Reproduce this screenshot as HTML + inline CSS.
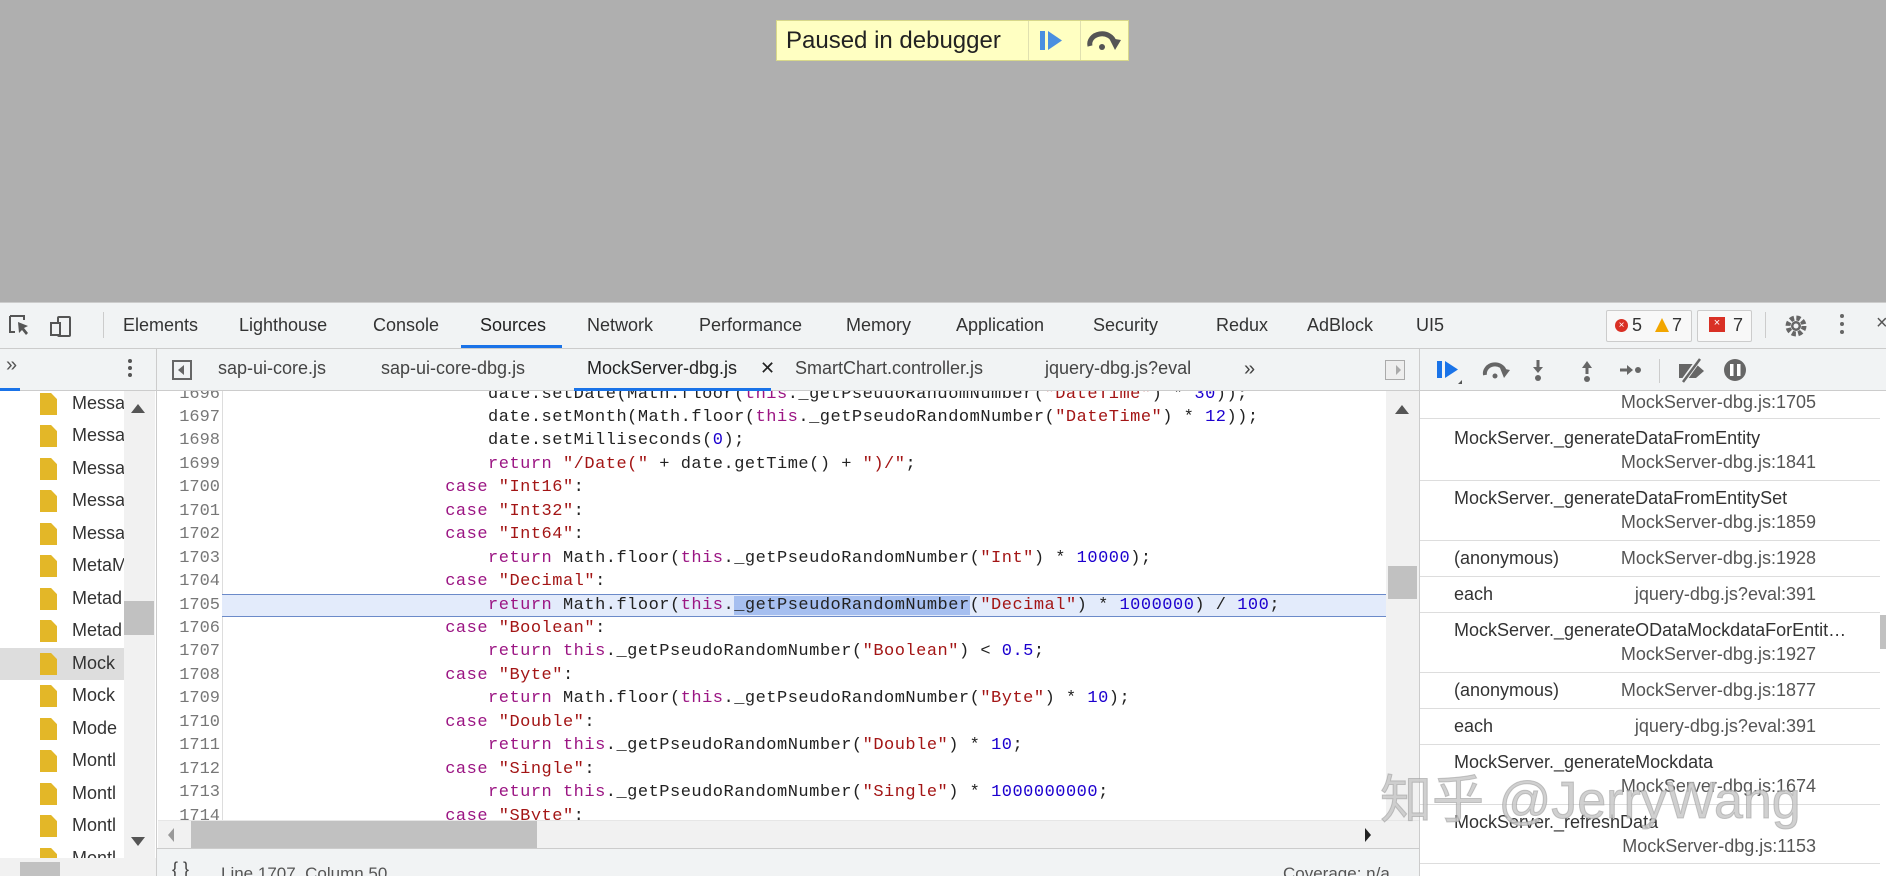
<!DOCTYPE html>
<html><head><meta charset="utf-8"><style>
*{margin:0;padding:0;box-sizing:border-box}
html,body{width:1886px;height:876px;overflow:hidden}
body{position:relative;background:#afafaf;font-family:"Liberation Sans",sans-serif;color:#333}
.a{position:absolute}
.tab{position:absolute;top:315px;font-size:18px;color:#333}
.ft{position:absolute;top:358px;font-size:18px;color:#444}
.code{position:absolute;left:158px;top:391px;width:1228px;height:429px;overflow:hidden;background:#fff}
.ln{position:absolute;left:0;width:1228px;height:23.45px;font-family:"Liberation Mono",monospace;font-size:17px;letter-spacing:0.5px;line-height:23.45px;white-space:pre;color:#222}
.ln .n{position:absolute;left:14px;width:48px;text-align:right;color:#777;letter-spacing:0}
.ln .c{position:absolute;left:116px}
.k{color:#9b1583}.s{color:#a31515}.m{color:#1c00cf}
.fi{position:absolute;left:0;width:124px;height:32px;font-size:18px}
.fi i{position:absolute;left:40px;top:5px;width:17px;height:22px;background:#e3b728;clip-path:polygon(0 0,65% 0,100% 28%,100% 100%,0 100%)}
.fi span{position:absolute;left:72px;top:5px;width:52px;overflow:hidden;white-space:nowrap;color:#333}
.cs{position:absolute;left:1420px;width:460px;border-bottom:1px solid #ddd;font-size:18px;color:#333}
.cs .nm{position:absolute;left:34px}
.cs .fl{position:absolute;right:64px;color:#555}
</style></head><body>
<div class="a" style="left:776px;top:20px;width:353px;height:41px;background:#ffffc2;border:1px solid #d8d88a"></div>
<div class="a" style="left:786px;top:27px;font-size:24px;color:#222">Paused in debugger</div>
<div class="a" style="left:1028px;top:21px;width:1px;height:39px;background:#e0e0b0"></div>
<div class="a" style="left:1080px;top:21px;width:1px;height:39px;background:#e0e0b0"></div>
<svg class="a" style="left:1040px;top:29px" width="28" height="24"><rect x="0" y="2" width="5" height="19" fill="#4a8fe0"/><path d="M8 2 L22 11.5 L8 21Z" fill="#4a8fe0"/></svg>
<svg class="a" style="left:1086px;top:30px" width="40" height="24"><path d="M4 16 A12 10 0 0 1 28 12" stroke="#555" stroke-width="5" fill="none"/><path d="M23 8 L35 10 L29 20Z" fill="#555"/><circle cx="16" cy="17" r="3" fill="#555"/></svg>

<div class="a" style="left:0;top:302px;width:1886px;height:574px;background:#fff"></div>
<div class="a" style="left:0;top:302px;width:1886px;height:47px;background:#f1f3f4;border-top:1px solid #ccc;border-bottom:1px solid #ccc"></div>
<svg class="a" style="left:8px;top:314px" width="70" height="24"><path d="M2 2h14v4M2 2v16h5" stroke="#555" stroke-width="2" fill="none"/><path d="M10 8l10 4-4 2 4 5-2 2-4-5-3 3z" fill="#555"/><rect x="50" y="3" width="12" height="19" rx="1" stroke="#555" stroke-width="2" fill="none"/><rect x="43" y="9" width="9" height="12" stroke="#555" stroke-width="2" fill="#f1f3f4"/></svg>
<div class="a" style="left:103px;top:312px;width:1px;height:26px;background:#ccc"></div>
<div class="tab" style="left:123px">Elements</div>
<div class="tab" style="left:239px">Lighthouse</div>
<div class="tab" style="left:373px">Console</div>
<div class="tab" style="left:480px;color:#222">Sources</div>
<div class="a" style="left:461px;top:345px;width:101px;height:3px;background:#1a73e8"></div>
<div class="tab" style="left:587px">Network</div>
<div class="tab" style="left:699px">Performance</div>
<div class="tab" style="left:846px">Memory</div>
<div class="tab" style="left:956px">Application</div>
<div class="tab" style="left:1093px">Security</div>
<div class="tab" style="left:1216px">Redux</div>
<div class="tab" style="left:1307px">AdBlock</div>
<div class="tab" style="left:1416px">UI5</div>
<div class="a" style="left:1606px;top:310px;width:86px;height:32px;border:1px solid #ccc;border-radius:2px;background:#f8f8f8"></div>
<div class="a" style="left:1615px;top:319px;width:13px;height:13px;border-radius:50%;background:#d93025;color:#fff;font-size:10px;text-align:center;line-height:13px">×</div>
<div class="a" style="left:1632px;top:315px;font-size:18px">5</div>
<svg class="a" style="left:1654px;top:317px" width="16" height="16"><path d="M8 1L15 15H1Z" fill="#f2a600"/></svg>
<div class="a" style="left:1672px;top:315px;font-size:18px">7</div>
<div class="a" style="left:1697px;top:310px;width:55px;height:32px;border:1px solid #ccc;border-radius:2px;background:#f8f8f8"></div>
<div class="a" style="left:1709px;top:317px;width:16px;height:15px;background:#d93025;color:#fff;font-size:11px;text-align:center;line-height:13px">×</div>
<div class="a" style="left:1733px;top:315px;font-size:18px">7</div>
<div class="a" style="left:1765px;top:312px;width:1px;height:26px;background:#ccc"></div>
<svg class="a" style="left:1784px;top:314px" width="24" height="24"><circle cx="12" cy="12" r="8" fill="none" stroke="#666" stroke-width="5" stroke-dasharray="4 2.3"/><circle cx="12" cy="12" r="5" fill="#666"/><circle cx="12" cy="12" r="2.5" fill="#f1f3f4"/></svg>
<div class="a" style="left:1840px;top:314px;width:4px;height:4px;background:#666;border-radius:50%;box-shadow:0 8px #666,0 16px #666"></div>
<div class="a" style="left:1876px;top:312px;font-size:20px;color:#555">×</div>

<div class="a" style="left:0;top:349px;width:1886px;height:42px;background:#f1f3f4;border-bottom:1px solid #ccc"></div>
<div class="a" style="left:6px;top:354px;font-size:20px;color:#555">»</div>
<div class="a" style="left:0;top:388px;width:20px;height:3px;background:#1a73e8"></div>
<div class="a" style="left:128px;top:359px;width:4px;height:4px;background:#555;border-radius:50%;box-shadow:0 7px #555,0 14px #555"></div>
<div class="a" style="left:156px;top:349px;width:1px;height:527px;background:#ccc"></div>
<div class="a" style="left:172px;top:360px;width:20px;height:20px;border:2px solid #666"></div>
<div class="a" style="left:178px;top:365px;width:0;height:0;border-top:5px solid transparent;border-bottom:5px solid transparent;border-right:6px solid #666"></div>
<div class="ft" style="left:218px">sap-ui-core.js</div>
<div class="ft" style="left:381px">sap-ui-core-dbg.js</div>
<div class="ft" style="left:587px;color:#222">MockServer-dbg.js</div>
<div class="ft" style="left:760px;color:#222">✕</div>
<div class="a" style="left:574px;top:388px;width:197px;height:3px;background:#1a73e8"></div>
<div class="ft" style="left:795px">SmartChart.controller.js</div>
<div class="ft" style="left:1045px">jquery-dbg.js?eval</div>
<div class="ft" style="left:1244px;font-size:20px">»</div>
<div class="a" style="left:1385px;top:360px;width:20px;height:20px;border:1px solid #aaa;background:#eee"></div>
<div class="a" style="left:1396px;top:365px;width:0;height:0;border-top:5px solid transparent;border-bottom:5px solid transparent;border-left:5px solid #aaa"></div>
<div class="a" style="left:1419px;top:349px;width:1px;height:527px;background:#ccc"></div>
<svg class="a" style="left:1432px;top:356px" width="340" height="34"><rect x="5" y="5" width="5" height="17" fill="#1a73e8"/><path d="M13 5L26 13.5L13 22Z" fill="#1a73e8"/><path d="M26 28L30 24V28Z" fill="#555"/>
<path d="M53 19A10 9 0 0 1 73 16" stroke="#666" stroke-width="4" fill="none"/><path d="M68 12L78 14L72 22Z" fill="#666"/><circle cx="63" cy="20" r="2.5" fill="#666"/>
<path d="M106 4V14" stroke="#666" stroke-width="3"/><path d="M101 11L106 17L111 11Z" fill="#666"/><circle cx="106" cy="22" r="3" fill="#666"/>
<path d="M155 10V18" stroke="#666" stroke-width="3"/><path d="M150 12L155 5L160 12Z" fill="#666"/><circle cx="155" cy="23" r="3" fill="#666"/>
<path d="M188 14H196" stroke="#666" stroke-width="3"/><path d="M195 9L201 14L195 19Z" fill="#666"/><circle cx="206" cy="14" r="3" fill="#666"/>
<rect x="227" y="3" width="1" height="24" fill="#ccc"/>
<path d="M247 8H264L272 15L264 22H247Z" fill="#666"/><path d="M250 27L268 2" stroke="#f1f3f4" stroke-width="5"/><path d="M251 26L268 3" stroke="#666" stroke-width="2.5"/>
<circle cx="303" cy="14" r="11" fill="#666"/><rect x="298" y="8" width="3.5" height="12" fill="#fff"/><rect x="305" y="8" width="3.5" height="12" fill="#fff"/></svg>

<div class="a" style="left:0;top:391px;width:156px;height:467px;background:#fff"></div>
<div class="fi" style="top:388px"><i></i><span>Messa</span></div>
<div class="fi" style="top:420px"><i></i><span>Messa</span></div>
<div class="fi" style="top:453px"><i></i><span>Messa</span></div>
<div class="fi" style="top:485px"><i></i><span>Messa</span></div>
<div class="fi" style="top:518px"><i></i><span>Messa</span></div>
<div class="fi" style="top:550px"><i></i><span>MetaM</span></div>
<div class="fi" style="top:583px"><i></i><span>Metad</span></div>
<div class="fi" style="top:615px"><i></i><span>Metad</span></div>
<div class="fi" style="top:648px;background:#ddd"><i></i><span>Mock</span></div>
<div class="fi" style="top:680px"><i></i><span>Mock</span></div>
<div class="fi" style="top:713px"><i></i><span>Mode</span></div>
<div class="fi" style="top:745px"><i></i><span>Montl</span></div>
<div class="fi" style="top:778px"><i></i><span>Montl</span></div>
<div class="fi" style="top:810px"><i></i><span>Montl</span></div>
<div class="fi" style="top:843px;height:15px;overflow:hidden"><i></i><span>Montl</span></div>
<div class="a" style="left:124px;top:391px;width:31px;height:467px;background:#f1f1f1"></div>
<div class="a" style="left:131px;top:404px;border-left:7px solid transparent;border-right:7px solid transparent;border-bottom:9px solid #555"></div>
<div class="a" style="left:124px;top:601px;width:30px;height:34px;background:#c1c1c1"></div>
<div class="a" style="left:131px;top:837px;border-left:7px solid transparent;border-right:7px solid transparent;border-top:9px solid #555"></div>
<div class="a" style="left:0;top:858px;width:156px;height:18px;background:#f1f1f1"></div>
<div class="a" style="left:20px;top:862px;width:40px;height:14px;background:#c1c1c1"></div>

<div class="code">
<div class="a" style="left:64px;top:0;width:1px;height:429px;background:#ddd"></div>
<div class="ln" style="top:-8.5px"><span class="n">1696</span><span class="c">                    date.setDate(Math.floor(<span class="k">this</span>._getPseudoRandomNumber(<span class="s">"DateTime"</span>) * <span class="m">30</span>));</span></div>
<div class="ln" style="top:14.95px"><span class="n">1697</span><span class="c">                    date.setMonth(Math.floor(<span class="k">this</span>._getPseudoRandomNumber(<span class="s">"DateTime"</span>) * <span class="m">12</span>));</span></div>
<div class="ln" style="top:38.4px"><span class="n">1698</span><span class="c">                    date.setMilliseconds(<span class="m">0</span>);</span></div>
<div class="ln" style="top:61.85px"><span class="n">1699</span><span class="c">                    <span class="k">return</span> <span class="s">"/Date("</span> + date.getTime() + <span class="s">")/"</span>;</span></div>
<div class="ln" style="top:85.3px"><span class="n">1700</span><span class="c">                <span class="k">case</span> <span class="s">"Int16"</span>:</span></div>
<div class="ln" style="top:108.75px"><span class="n">1701</span><span class="c">                <span class="k">case</span> <span class="s">"Int32"</span>:</span></div>
<div class="ln" style="top:132.2px"><span class="n">1702</span><span class="c">                <span class="k">case</span> <span class="s">"Int64"</span>:</span></div>
<div class="ln" style="top:155.65px"><span class="n">1703</span><span class="c">                    <span class="k">return</span> Math.floor(<span class="k">this</span>._getPseudoRandomNumber(<span class="s">"Int"</span>) * <span class="m">10000</span>);</span></div>
<div class="ln" style="top:179.1px"><span class="n">1704</span><span class="c">                <span class="k">case</span> <span class="s">"Decimal"</span>:</span></div>
<div class="ln" style="top:202.55px"><span class="n">1705</span></div>
<div class="ln" style="top:202.55px;background:#e3ebfb;border-top:1px solid #6b8ac9;border-bottom:1px solid #6b8ac9;left:64px;width:1164px;line-height:21.5px"><span class="c" style="left:52px">                    <span class="k">return</span> Math.floor(<span class="k">this</span>.<span style="background:#a6bff0">_getPseudoRandomNumber</span>(<span class="s">"Decimal"</span>) * <span class="m">1000000</span>) / <span class="m">100</span>;</span></div>
<div class="ln" style="top:226px"><span class="n">1706</span><span class="c">                <span class="k">case</span> <span class="s">"Boolean"</span>:</span></div>
<div class="ln" style="top:249.45px"><span class="n">1707</span><span class="c">                    <span class="k">return</span> <span class="k">this</span>._getPseudoRandomNumber(<span class="s">"Boolean"</span>) &lt; <span class="m">0.5</span>;</span></div>
<div class="ln" style="top:272.9px"><span class="n">1708</span><span class="c">                <span class="k">case</span> <span class="s">"Byte"</span>:</span></div>
<div class="ln" style="top:296.35px"><span class="n">1709</span><span class="c">                    <span class="k">return</span> Math.floor(<span class="k">this</span>._getPseudoRandomNumber(<span class="s">"Byte"</span>) * <span class="m">10</span>);</span></div>
<div class="ln" style="top:319.8px"><span class="n">1710</span><span class="c">                <span class="k">case</span> <span class="s">"Double"</span>:</span></div>
<div class="ln" style="top:343.25px"><span class="n">1711</span><span class="c">                    <span class="k">return</span> <span class="k">this</span>._getPseudoRandomNumber(<span class="s">"Double"</span>) * <span class="m">10</span>;</span></div>
<div class="ln" style="top:366.7px"><span class="n">1712</span><span class="c">                <span class="k">case</span> <span class="s">"Single"</span>:</span></div>
<div class="ln" style="top:390.15px"><span class="n">1713</span><span class="c">                    <span class="k">return</span> <span class="k">this</span>._getPseudoRandomNumber(<span class="s">"Single"</span>) * <span class="m">1000000000</span>;</span></div>
<div class="ln" style="top:413.6px"><span class="n">1714</span><span class="c">                <span class="k">case</span> <span class="s">"SByte"</span>:</span></div>
</div>
<div class="a" style="left:1386px;top:391px;width:33px;height:429px;background:#f1f1f1"></div>
<div class="a" style="left:1395px;top:405px;border-left:7px solid transparent;border-right:7px solid transparent;border-bottom:9px solid #555"></div>
<div class="a" style="left:1388px;top:566px;width:29px;height:33px;background:#c1c1c1"></div>
<div class="a" style="left:158px;top:820px;width:1261px;height:28px;background:#f1f1f1;border-top:1px solid #e6e6e6"></div>
<div class="a" style="left:168px;top:828px;border-top:7px solid transparent;border-bottom:7px solid transparent;border-right:6px solid #999"></div>
<div class="a" style="left:191px;top:821px;width:346px;height:28px;background:#c1c1c1"></div>
<div class="a" style="left:1365px;top:828px;border-top:7px solid transparent;border-bottom:7px solid transparent;border-left:6px solid #222"></div>
<div class="a" style="left:157px;top:848px;width:1262px;height:28px;background:#f1f3f4;border-top:1px solid #ccc"></div>
<div class="a" style="left:172px;top:859px;font-size:18px;color:#444">{ }</div>
<div class="a" style="left:221px;top:864px;font-size:17px;color:#555">Line 1707, Column 50</div>
<div class="a" style="left:1283px;top:864px;font-size:17px;color:#555">Coverage: n/a</div>

<div class="a" style="left:1420px;top:391px;width:466px;height:485px;background:#fff"></div>
<div class="cs" style="top:391px;height:28px"><span class="fl" style="top:1px">MockServer-dbg.js:1705</span></div>
<div class="cs" style="top:419px;height:62px"><span class="nm" style="top:9px">MockServer._generateDataFromEntity</span><span class="fl" style="top:33px">MockServer-dbg.js:1841</span></div>
<div class="cs" style="top:481px;height:60px"><span class="nm" style="top:7px">MockServer._generateDataFromEntitySet</span><span class="fl" style="top:31px">MockServer-dbg.js:1859</span></div>
<div class="cs" style="top:541px;height:36px"><span class="nm" style="top:7px">(anonymous)</span><span class="fl" style="top:7px">MockServer-dbg.js:1928</span></div>
<div class="cs" style="top:577px;height:36px"><span class="nm" style="top:7px">each</span><span class="fl" style="top:7px">jquery-dbg.js?eval:391</span></div>
<div class="cs" style="top:613px;height:60px"><span class="nm" style="top:7px">MockServer._generateODataMockdataForEntit…</span><span class="fl" style="top:31px">MockServer-dbg.js:1927</span></div>
<div class="cs" style="top:673px;height:36px"><span class="nm" style="top:7px">(anonymous)</span><span class="fl" style="top:7px">MockServer-dbg.js:1877</span></div>
<div class="cs" style="top:709px;height:36px"><span class="nm" style="top:7px">each</span><span class="fl" style="top:7px">jquery-dbg.js?eval:391</span></div>
<div class="cs" style="top:745px;height:60px"><span class="nm" style="top:7px">MockServer._generateMockdata</span><span class="fl" style="top:31px">MockServer-dbg.js:1674</span></div>
<div class="cs" style="top:805px;height:59px"><span class="nm" style="top:7px">MockServer._refreshData</span><span class="fl" style="top:31px">MockServer-dbg.js:1153</span></div>
<div class="a" style="left:1880px;top:615px;width:6px;height:34px;background:#c1c1c1"></div>
<div class="a" style="left:1380px;top:758px;font-size:52px;color:rgba(200,200,200,0.85);font-family:'Liberation Sans','Noto Sans CJK SC',sans-serif;white-space:nowrap;-webkit-text-stroke:1px rgba(150,150,150,0.5)">知乎 @JerryWang</div>
</body></html>
